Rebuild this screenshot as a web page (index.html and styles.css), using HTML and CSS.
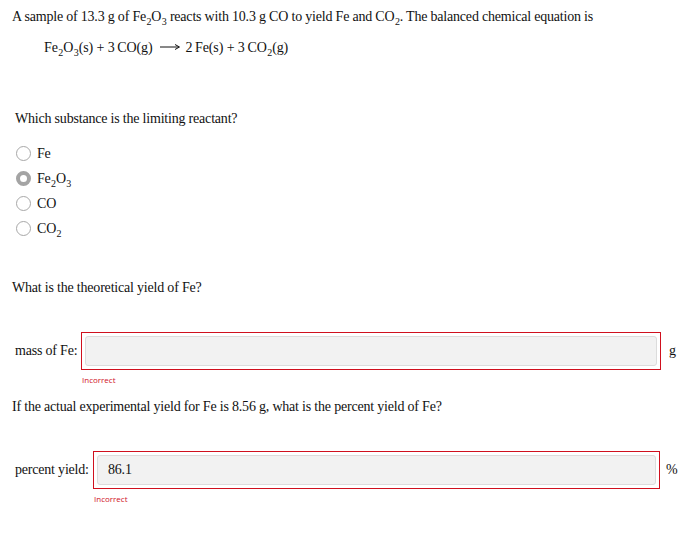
FILE: index.html
```html
<!DOCTYPE html>
<html>
<head>
<meta charset="utf-8">
<link rel="stylesheet" href="styles.css">
</head>
<body>
<div class="page">
  <p class="intro">A sample of 13.3 g of Fe<sub>2</sub>O<sub>3</sub> reacts with 10.3 g CO to yield Fe and CO<sub>2</sub>. The balanced chemical equation is</p>
  <p class="equation">Fe<sub>2</sub>O<sub>3</sub>(s) + 3&#8201;CO(g) <svg class="arrow" width="20" height="8" viewBox="0 0 20 8"><path d="M0 4H18.5" stroke="#111" stroke-width="1"/><path d="M15 1.5L19.5 4L15 6.5" fill="none" stroke="#111" stroke-width="1"/></svg> 2&#8201;Fe(s) + 3&#8201;CO<sub>2</sub>(g)</p>

  <p class="question q1">Which substance is the limiting reactant?</p>
  <div class="options">
    <div class="option"><span class="radio"></span><span class="opt-label">Fe</span></div>
    <div class="option"><span class="radio checked"></span><span class="opt-label">Fe<sub>2</sub>O<sub>3</sub></span></div>
    <div class="option"><span class="radio"></span><span class="opt-label">CO</span></div>
    <div class="option"><span class="radio"></span><span class="opt-label">CO<sub>2</sub></span></div>
  </div>

  <p class="question q2">What is the theoretical yield of Fe?</p>
  <div class="answer-row row1">
    <span class="field-label">mass of Fe:</span>
    <div class="field">
      <div class="field-box"><div class="field-input"></div></div>
      <div class="feedback">Incorrect</div>
    </div>
    <span class="unit">g</span>
  </div>

  <p class="question q3">If the actual experimental yield for Fe is 8.56 g, what is the percent yield of Fe?</p>
  <div class="answer-row row2">
    <span class="field-label">percent yield:</span>
    <div class="field">
      <div class="field-box"><div class="field-input">86.1</div></div>
      <div class="feedback">Incorrect</div>
    </div>
    <span class="unit">%</span>
  </div>
</div>
</body>
</html>
```
FILE: styles.css
```css
html, body {
  margin: 0;
  padding: 0;
  background: #ffffff;
}
body {
  font-family: "Liberation Serif", "Times New Roman", serif;
  font-size: 14px;
  color: #111111;
}
.page {
  width: 694px;
  height: 538px;
  overflow: hidden;
}
p {
  margin: 0;
  line-height: 20px;
}
sub {
  font-size: 10px;
  vertical-align: -4px;
  line-height: 0;
  padding-left: 0.5px;
}
.intro {
  padding-top: 7px;
  padding-left: 12px;
  letter-spacing: -0.2px;
}
.equation {
  margin-top: 11px;
  padding-left: 44px;
  letter-spacing: -0.1px;
}
.arrow {
  vertical-align: 1px;
  margin: 0 2px 0 4px;
}
.question {
  letter-spacing: -0.2px;
}
.q1 {
  margin-top: 51px;
  padding-left: 15px;
}
.options {
  margin-top: 12px;
  display: flex;
  flex-direction: column;
  padding-left: 16px;
}
.option {
  display: flex;
  align-items: center;
  gap: 6px;
  height: 25px;
}
.radio {
  box-sizing: border-box;
  width: 15px;
  height: 15px;
  border-radius: 50%;
  border: 1px solid #a8a8a8;
  background: #fff;
}
.radio.checked {
  border: 4.5px solid #a4a4a4;
}
.opt-label {
  letter-spacing: -0.2px;
}
.q2 {
  margin-top: 37px;
  padding-left: 12px;
}
.answer-row {
  display: flex;
  align-items: flex-start;
}
.row1 {
  margin-top: 34px;
}
.row2 {
  margin-top: 34px;
}
.field-label {
  box-sizing: border-box;
  flex: none;
  white-space: nowrap;
  line-height: 38px;
  padding-left: 15px;
  letter-spacing: -0.2px;
}
.row1 .field-label { width: 81px; }
.row2 .field-label { width: 93px; }
.field {
  flex: 1;
  display: flex;
  flex-direction: column;
}
.field-box {
  box-sizing: border-box;
  height: 38px;
  border: 1px solid #d0101e;
  padding: 3px;
}
.field-input {
  box-sizing: border-box;
  height: 30px;
  background: #f2f2f2;
  border: 1px solid #dcdcdc;
  border-radius: 3px;
  line-height: 28px;
  padding-left: 10px;
  letter-spacing: -0.2px;
}
.feedback {
  font-family: "Open Sans", "Liberation Sans", sans-serif;
  font-size: 8px;
  color: #d0101e;
  line-height: 12px;
  margin-top: 4px;
  padding-left: 1px;
}
.unit {
  flex: none;
  line-height: 38px;
  width: 33px;
  padding-left: 8px;
  box-sizing: border-box;
}
.row2 .unit {
  width: 34px;
  padding-left: 6px;
}
.q3 {
  margin-top: 11px;
  padding-left: 12px;
}
```
